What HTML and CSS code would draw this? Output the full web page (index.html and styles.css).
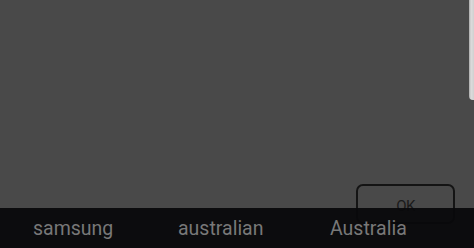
FILE: index.html
```html
<!DOCTYPE html>
<html>
<head>
<meta charset="utf-8">
<link rel="stylesheet" href="styles.css">
</head>
<body>
<div class="screen">
  <div class="scrollbar"></div>
  <div class="content">
    <button class="ok-btn">OK</button>
  </div>
  <div class="suggestions">
    <span class="sug">samsung</span>
    <span class="sug">australian</span>
    <span class="sug">Australia</span>
  </div>
</div>
</body>
</html>
```

FILE: styles.css
```css
html, body {
  margin: 0;
  padding: 0;
  background: #494949;
}
.screen {
  position: relative;
  width: 474px;
  height: 248px;
  display: flex;
  flex-direction: column;
  background: #494949;
  overflow: hidden;
  font-family: Roboto, "Noto Sans", sans-serif;
}
.scrollbar {
  position: absolute;
  top: 0;
  right: 0;
  width: 5px;
  height: 100px;
  background: linear-gradient(to right, #a9a9a9, #dcdcdc 40%, #d0d0d0);
  border-bottom-left-radius: 4px;
}
.content {
  flex: 1;
  display: flex;
  justify-content: flex-end;
  align-items: flex-end;
  padding-right: 19px;
}
.ok-btn {
  width: 99px;
  height: 40px;
  margin-bottom: -16px;
  background: transparent;
  border: 2px solid #141414;
  border-radius: 7px;
  color: #1a1a1a;
  font-family: Roboto, sans-serif;
  font-size: 15px;
  letter-spacing: -0.5px;
  padding: 0;
  display: flex;
  justify-content: center;
  align-items: flex-start;
  padding-top: 11px;
  box-sizing: border-box;
}
.suggestions {
  position: relative;
  height: 40px;
  flex: none;
  background: rgba(9, 9, 11, 0.94);
  display: grid;
  grid-template-columns: 145px 152px 177px;
  align-items: center;
  font-size: 19.5px;
  color: #787878;
}
.sug:nth-child(1) { padding-left: 33px; }
.sug:nth-child(2) { padding-left: 33px; }
.sug:nth-child(3) { padding-left: 33px; }
```
